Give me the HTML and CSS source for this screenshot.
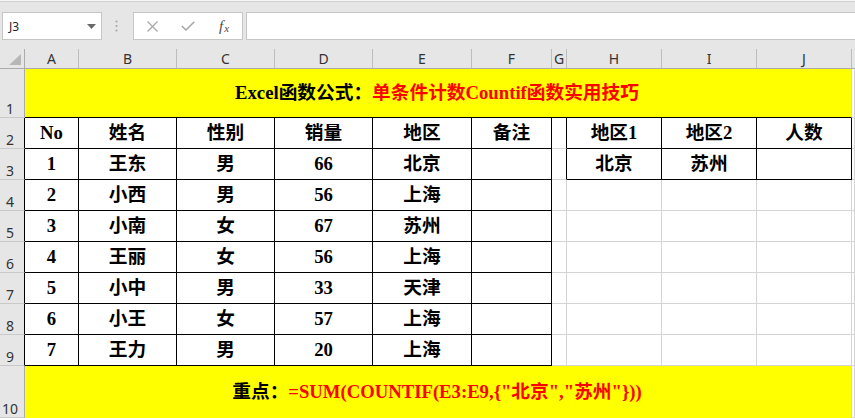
FILE: index.html
```html
<!DOCTYPE html>
<html lang="zh-CN">
<head>
<meta charset="utf-8">
<title>Excel函数公式</title>
<link rel="stylesheet" href="styles.css">
</head>
<body>
<div class="app">
  <div class="toolbar">
    <div class="namebox">
      <span class="name">J3</span>
      <svg class="dd" width="9" height="5" viewBox="0 0 9 5"><path d="M0 0H9L4.5 5Z" fill="#6a6a6a"/></svg>
    </div>
    <div class="sep">
      <svg width="3" height="12" viewBox="0 0 3 12"><circle cx="1.5" cy="1.5" r="1.1" fill="#a8a8a8"/><circle cx="1.5" cy="6" r="1.1" fill="#a8a8a8"/><circle cx="1.5" cy="10.5" r="1.1" fill="#a8a8a8"/></svg>
    </div>
    <div class="fbtns">
      <div class="fb"><svg width="11" height="11" viewBox="0 0 11 11"><path d="M0.5 0.5L10.5 10.5M10.5 0.5L0.5 10.5" stroke="#a9a9a9" stroke-width="1.3" fill="none"/></svg></div>
      <div class="fb"><svg width="14" height="10" viewBox="0 0 14 10"><path d="M0.8 5L5 9L13.3 0.8" stroke="#a9a9a9" stroke-width="1.6" fill="none"/></svg></div>
      <div class="fb fx"><span class="f">f</span><span class="x">x</span></div>
    </div>
    <div class="finput"></div>
  </div>

  <div class="sheet">
    <div class="corner"><svg width="12" height="11" viewBox="0 0 12 11"><path d="M12 0V11H0Z" fill="#b7b7b7"/></svg></div>
    <div class="ch">A</div><div class="ch">B</div><div class="ch">C</div><div class="ch">D</div><div class="ch">E</div><div class="ch">F</div><div class="ch">G</div><div class="ch">H</div><div class="ch">I</div><div class="ch">J</div><div class="ch last"></div>

    <div class="rh">1</div>
    <div class="band title"><span>Excel函数公式：</span><span class="red">单条件计数Countif函数实用技巧</span></div>
    <div class="c"></div>

    <div class="rh edge">2</div>
    <div class="c t">No</div><div class="c t">姓名</div><div class="c t">性别</div><div class="c t">销量</div><div class="c t">地区</div><div class="c t">备注</div>
    <div class="c gl"></div>
    <div class="c t">地区1</div><div class="c t">地区2</div><div class="c t">人数</div>
    <div class="c"></div>

    <div class="rh edge">3</div>
    <div class="c t">1</div><div class="c t">王东</div><div class="c t">男</div><div class="c t">66</div><div class="c t">北京</div><div class="c t"></div>
    <div class="c gl"></div>
    <div class="c t">北京</div><div class="c t">苏州</div><div class="c t"></div>
    <div class="c"></div>

    <div class="rh edge">4</div>
    <div class="c t">2</div><div class="c t">小西</div><div class="c t">男</div><div class="c t">56</div><div class="c t">上海</div><div class="c t"></div>
    <div class="c"></div><div class="c"></div><div class="c"></div><div class="c"></div><div class="c"></div>

    <div class="rh edge">5</div>
    <div class="c t">3</div><div class="c t">小南</div><div class="c t">女</div><div class="c t">67</div><div class="c t">苏州</div><div class="c t"></div>
    <div class="c"></div><div class="c"></div><div class="c"></div><div class="c"></div><div class="c"></div>

    <div class="rh edge">6</div>
    <div class="c t">4</div><div class="c t">王丽</div><div class="c t">女</div><div class="c t">56</div><div class="c t">上海</div><div class="c t"></div>
    <div class="c"></div><div class="c"></div><div class="c"></div><div class="c"></div><div class="c"></div>

    <div class="rh edge">7</div>
    <div class="c t">5</div><div class="c t">小中</div><div class="c t">男</div><div class="c t">33</div><div class="c t">天津</div><div class="c t"></div>
    <div class="c"></div><div class="c"></div><div class="c"></div><div class="c"></div><div class="c"></div>

    <div class="rh edge">8</div>
    <div class="c t">6</div><div class="c t">小王</div><div class="c t">女</div><div class="c t">57</div><div class="c t">上海</div><div class="c t"></div>
    <div class="c"></div><div class="c"></div><div class="c"></div><div class="c"></div><div class="c"></div>

    <div class="rh edge">9</div>
    <div class="c t">7</div><div class="c t">王力</div><div class="c t">男</div><div class="c t">20</div><div class="c t">上海</div><div class="c t"></div>
    <div class="c"></div><div class="c"></div><div class="c"></div><div class="c"></div><div class="c"></div>

    <div class="rh">10</div>
    <div class="band note"><span>重点：</span><span class="red">=SUM(COUNTIF(E3:E9,{"北京","苏州"}))</span></div>
    <div class="c"></div>
  </div>
</div>
</body>
</html>
```

FILE: styles.css
```css
* { box-sizing: border-box; }

html, body {
  margin: 0;
  padding: 0;
  background: #ffffff;
  overflow: hidden;
}

.app {
  width: 855px;
  height: 418px;
  overflow: hidden;
}

/* ---------- formula bar ---------- */
.toolbar {
  height: 49px;
  background: #e6e6e6;
  box-shadow: inset 0 1px 0 #f6f6f6, inset 0 2px 0 #d0d0d0;
  display: flex;
  align-items: flex-start;
  padding: 12px 0 0 2px;
}

.namebox {
  width: 100px;
  height: 28px;
  background: #ffffff;
  border: 1px solid #c6c6c6;
  display: flex;
  align-items: center;
  justify-content: space-between;
  padding: 0 5px 0 6px;
}

.name {
  font-family: "Noto Sans", "Liberation Sans", sans-serif;
  font-size: 12px;
  color: #262626;
}

.sep {
  width: 31px;
  height: 28px;
  display: flex;
  align-items: center;
  justify-content: center;
  padding-right: 2px;
}

.fbtns {
  width: 110px;
  height: 28px;
  background: #ffffff;
  border: 1px solid #c6c6c6;
  display: grid;
  grid-template-columns: repeat(3, 36px);
  align-items: center;
  justify-items: center;
}

.fb {
  display: flex;
  align-items: center;
  justify-content: center;
}

.fx {
  font-family: "Liberation Serif", serif;
  font-style: italic;
  color: #4a4a4a;
  line-height: 1;
}

.fx .f { font-size: 15px; }
.fx .x { font-size: 11px; margin-left: 1px; position: relative; top: 2px; }

.finput {
  flex: 1;
  height: 28px;
  margin-left: 3px;
  margin-right: -3px;
  background: #ffffff;
  border: 1px solid #c6c6c6;
}

/* ---------- sheet grid ---------- */
.sheet {
  display: grid;
  grid-template-columns: 25px 54px 98px 98px 98px 99px 80px 15px 95px 95px 95px 1fr;
  grid-template-rows: 20px 49px repeat(8, 31px) 52px;
  background: #ffffff;
}

.corner {
  background: #e6e6e6;
  border-right: 1px solid #ababab;
  border-bottom: 1px solid #ababab;
  display: flex;
  align-items: flex-end;
  justify-content: flex-end;
  padding: 0 3px 3px 0;
}

.ch {
  background: #e6e6e6;
  border-right: 1px solid #bdbdbd;
  border-bottom: 1px solid #ababab;
  display: flex;
  align-items: center;
  justify-content: center;
  font-family: "Noto Sans", "Liberation Sans", sans-serif;
  font-size: 14px;
  color: #333333;
  line-height: 1;
}

.ch.last { border-right: none; }

.rh {
  background: #e6e6e6;
  border-right: 1px solid #ababab;
  border-bottom: 1px solid #c9c9c9;
  display: flex;
  align-items: flex-end;
  justify-content: center;
  padding: 0 4px 1px 0;
  font-family: "Noto Sans", "Liberation Sans", sans-serif;
  font-size: 14px;
  line-height: 1;
  color: #333333;
}

.rh.edge { border-right-color: #000000; }

.c {
  border-right: 1px solid #d4d4d4;
  border-bottom: 1px solid #d4d4d4;
  display: flex;
  align-items: center;
  justify-content: center;
  font-family: "Liberation Serif", "Noto Sans CJK SC", serif;
  font-size: 18.7px;
  font-weight: bold;
  color: #000000;
  line-height: 1;
  white-space: nowrap;
}

.c.t {
  border-right-color: #000000;
  border-bottom-color: #000000;
}

.c.gl { border-right-color: #000000; }

.band {
  grid-column: span 10;
  background: #ffff00;
  display: flex;
  align-items: center;
  justify-content: center;
  font-family: "Liberation Serif", "Noto Sans CJK SC", serif;
  font-size: 18.7px;
  font-weight: bold;
  color: #000000;
  line-height: 1;
  white-space: nowrap;
  border-right: 1px solid #d4d4d4;
}

.title {
  border-bottom: 1px solid #000000;
  padding-right: 2px;
}

.note { padding-right: 2px; }

.red { color: #ff0000; }
```
